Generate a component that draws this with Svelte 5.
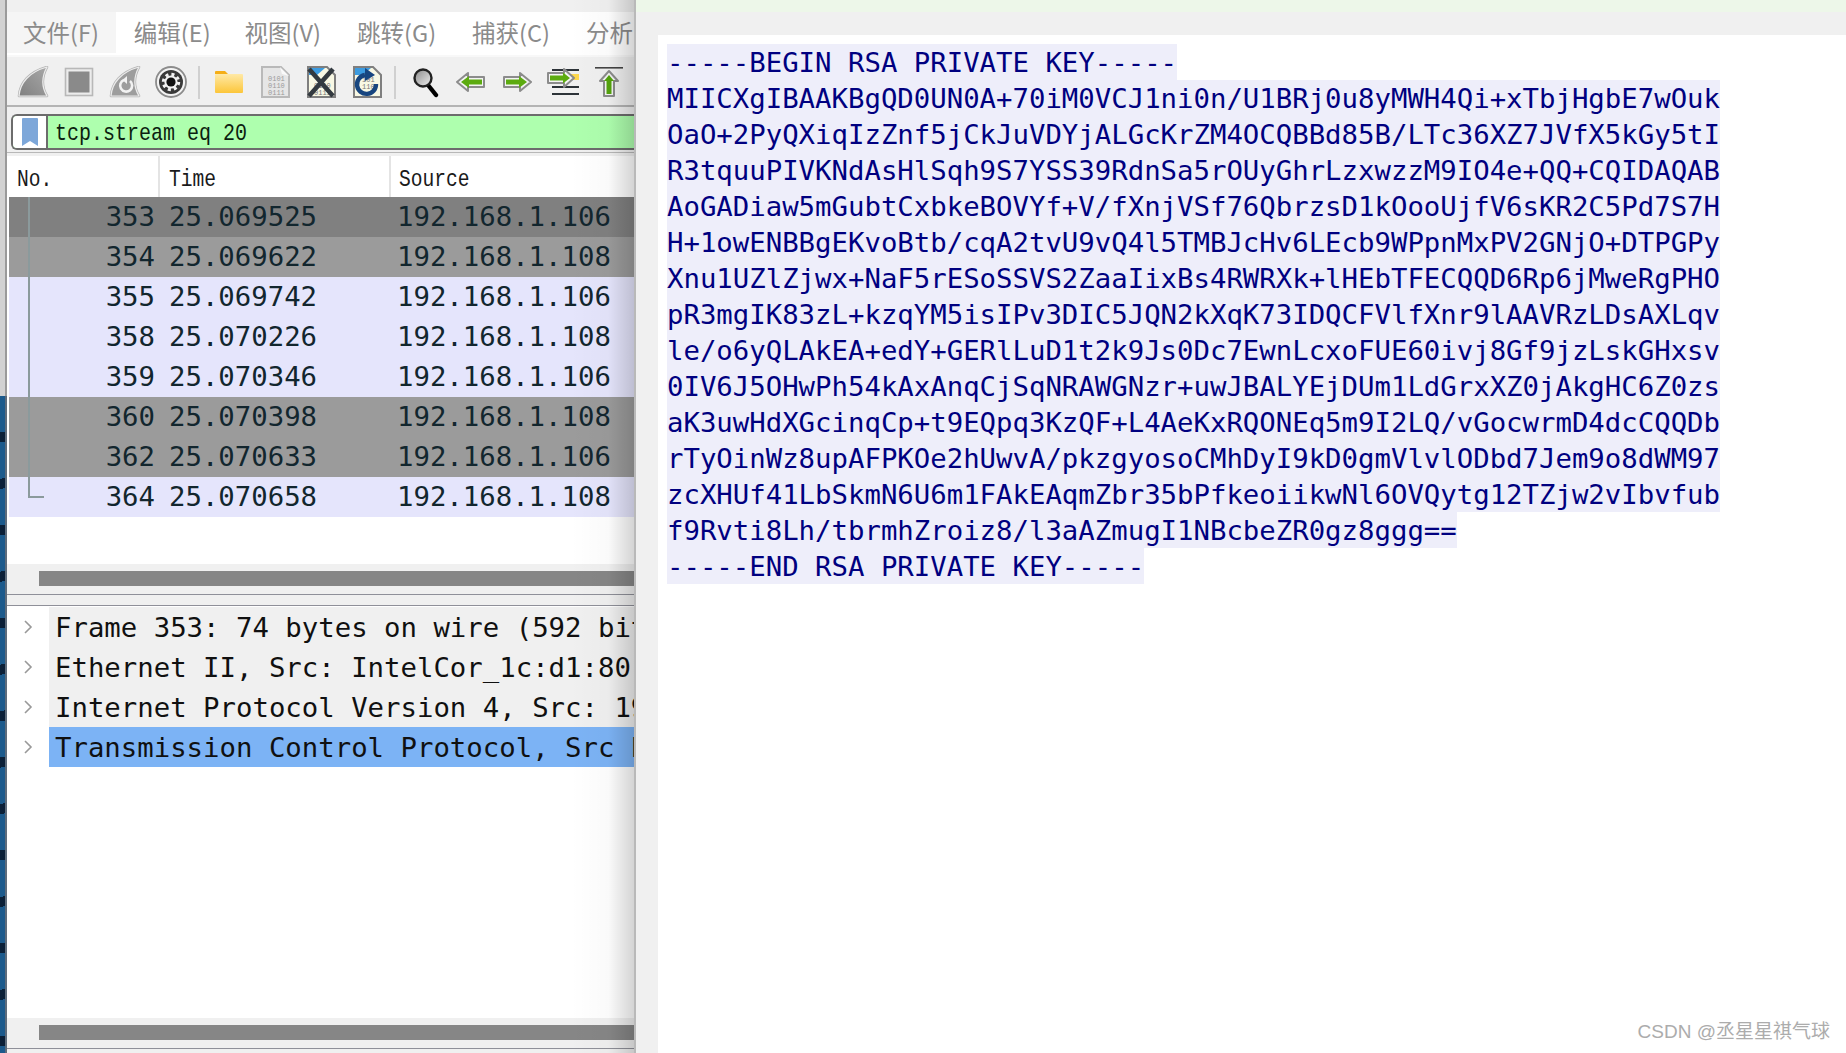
<script lang="ts">
	// Wireshark capture window on the left, extracted key text on the right

	const menus = ['文件(F)', '编辑(E)', '视图(V)', '跳转(G)', '捕获(C)', '分析'];

	const columns = ['No.', 'Time', 'Source'];

	const packets = [
		{ no: 353, time: '25.069525', src: '192.168.1.106', tone: 'dark' },
		{ no: 354, time: '25.069622', src: '192.168.1.108', tone: 'grey' },
		{ no: 355, time: '25.069742', src: '192.168.1.106', tone: 'lav' },
		{ no: 358, time: '25.070226', src: '192.168.1.108', tone: 'lav' },
		{ no: 359, time: '25.070346', src: '192.168.1.106', tone: 'lav' },
		{ no: 360, time: '25.070398', src: '192.168.1.108', tone: 'grey' },
		{ no: 362, time: '25.070633', src: '192.168.1.106', tone: 'grey' },
		{ no: 364, time: '25.070658', src: '192.168.1.108', tone: 'lav' }
	];

	const details = [
		'Frame 353: 74 bytes on wire (592 bits), 74 bytes captured',
		'Ethernet II, Src: IntelCor_1c:d1:80',
		'Internet Protocol Version 4, Src: 192.168.1.106',
		'Transmission Control Protocol, Src Port: 1234'
	];

	const keyLines = [
		'-----BEGIN RSA PRIVATE KEY-----',
		'MIICXgIBAAKBgQD0UN0A+70iM0VCJ1ni0n/U1BRj0u8yMWH4Qi+xTbjHgbE7wOuk',
		'OaO+2PyQXiqIzZnf5jCkJuVDYjALGcKrZM4OCQBBd85B/LTc36XZ7JVfX5kGy5tI',
		'R3tquuPIVKNdAsHlSqh9S7YSS39RdnSa5rOUyGhrLzxwzzM9IO4e+QQ+CQIDAQAB',
		'AoGADiaw5mGubtCxbkeBOVYf+V/fXnjVSf76QbrzsD1kOooUjfV6sKR2C5Pd7S7H',
		'H+1owENBBgEKvoBtb/cqA2tvU9vQ4l5TMBJcHv6LEcb9WPpnMxPV2GNjO+DTPGPy',
		'Xnu1UZlZjwx+NaF5rESoSSVS2ZaaIixBs4RWRXk+lHEbTFECQQD6Rp6jMweRgPHO',
		'pR3mgIK83zL+kzqYM5isIPv3DIC5JQN2kXqK73IDQCFVlfXnr9lAAVRzLDsAXLqv',
		'le/o6yQLAkEA+edY+GERlLuD1t2k9Js0Dc7EwnLcxoFUE60ivj8Gf9jzLskGHxsv',
		'0IV6J5OHwPh54kAxAnqCjSqNRAWGNzr+uwJBALYEjDUm1LdGrxXZ0jAkgHC6Z0zs',
		'aK3uwHdXGcinqCp+t9EQpq3KzQF+L4AeKxRQONEq5m9I2LQ/vGocwrmD4dcCQQDb',
		'rTyOinWz8upAFPKOe2hUwvA/pkzgyosoCMhDyI9kD0gmVlvlODbd7Jem9o8dWM97',
		'zcXHUf41LbSkmN6U6m1FAkEAqmZbr35bPfkeoiikwNl6OVQytg12TZjw2vIbvfub',
		'f9Rvti8Lh/tbrmhZroiz8/l3aAZmugI1NBcbeZR0gz8ggg==',
		'-----END RSA PRIVATE KEY-----'
	];

	const fin = 'M2 30 C3 17 12 6 30 1 C25 10 24 20 30 30 Z';
</script>

<div class="screen">
	<div class="desktop">
		<div class="desktop-top"></div>
		<div class="desktop-bottom"></div>
	</div>

	<section class="capture">
		<div class="top-gap"></div>

		<nav class="menu">
			{#each menus as item, i}
				<span class="menu-item" class:hover={i === 0}>{item}</span>
			{/each}
		</nav>

		<div class="toolbar">
			<span class="tool">
				<svg viewBox="0 0 32 32" width="32" height="32">
					<defs>
						<linearGradient id="finfill" x1="1" y1="0" x2="0" y2="1">
							<stop offset="0" stop-color="#a8a8a8" />
							<stop offset="1" stop-color="#808080" />
						</linearGradient>
					</defs>
					<path d={fin} fill="none" stroke="#b4b4b4" stroke-width="2.6" stroke-linejoin="round" />
					<path d={fin} fill="url(#finfill)" stroke="#ececec" stroke-width="1.2" stroke-linejoin="round" />
				</svg>
			</span>
			<span class="tool">
				<svg viewBox="0 0 32 32" width="32" height="32">
					<rect x="2.5" y="2.5" width="27" height="27" fill="#ececec" stroke="#b8b8b8" stroke-width="1.6" />
					<rect x="5.5" y="5.5" width="21" height="21" fill="#8a8a8a" />
				</svg>
			</span>
			<span class="tool">
				<svg viewBox="0 0 32 32" width="32" height="32">
					<path d={fin} fill="none" stroke="#b4b4b4" stroke-width="2.6" stroke-linejoin="round" />
					<path d={fin} fill="#9d9d9d" stroke="#ececec" stroke-width="1.2" stroke-linejoin="round" />
					<path d="M21 15 A6 6 0 1 1 15 14" fill="none" stroke="#f2f2f2" stroke-width="2.6" />
					<path d="M18 10 L13.5 14 L18 18 Z" fill="#f2f2f2" />
				</svg>
			</span>
			<span class="tool">
				<svg viewBox="0 0 32 32" width="32" height="32">
					<circle cx="16" cy="16" r="15" fill="#f4f4f4" stroke="#8c8c8c" stroke-width="1.8" />
					<circle cx="16" cy="16" r="12" fill="#3a3a3a" />
					<circle cx="16" cy="16" r="7.6" fill="none" stroke="#f2f2f2" stroke-width="3.2" stroke-dasharray="3 3" />
					<circle cx="16" cy="16" r="6.6" fill="#f2f2f2" />
					<circle cx="16" cy="16" r="4.6" fill="#111" />
				</svg>
			</span>
			<span class="tool-sep"></span>
			<span class="tool">
				<svg viewBox="0 0 32 32" width="32" height="32">
					<defs>
						<linearGradient id="folder" x1="0" y1="0" x2="0" y2="1">
							<stop offset="0" stop-color="#ffe9a6" />
							<stop offset="1" stop-color="#fcc63a" />
						</linearGradient>
					</defs>
					<path d="M2 6 a1 1 0 0 1 1-1 h9 l3 3 h-13 Z" fill="#f5ae17" />
					<rect x="2" y="8" width="28" height="19" rx="1" fill="url(#folder)" />
				</svg>
			</span>
			<span class="tool">
				<svg viewBox="0 0 32 32" width="32" height="32">
					<path d="M3 1 H22 L30 9 V31 H3 Z" fill="#e6e6e6" stroke="#b9b9b9" stroke-width="2" />
					<path d="M21 1 L23 8 L30 10 Z" fill="#fafafa" />
					<text class="bits" x="9" y="15" fill="#9a9a9a">0101</text>
					<text class="bits" x="9" y="22" fill="#9a9a9a">0110</text>
					<text class="bits" x="9" y="29" fill="#9a9a9a">0111</text>
				</svg>
			</span>
			<span class="tool">
				<svg viewBox="0 0 32 32" width="32" height="32">
					<path d="M3 1 H22 L30 9 V31 H3 Z" fill="#f8f8e4" stroke="#7f7f7f" stroke-width="2" />
					<path d="M4 2 H20 L12 9 H4 Z" fill="#3c9be0" />
					<text class="bits" x="9" y="22" fill="#777">0110</text>
					<text class="bits" x="9" y="29" fill="#777">0111</text>
					<path d="M4 3 L28 30 M28 3 L4 30" stroke="#333a40" stroke-width="4.6" />
				</svg>
			</span>
			<span class="tool">
				<svg viewBox="0 0 32 32" width="32" height="32">
					<path d="M3 1 H22 L30 9 V31 H3 Z" fill="#f8f8e4" stroke="#7f7f7f" stroke-width="2" />
					<path d="M4 2 H20 L12 9 H4 Z" fill="#3c9be0" />
					<text class="bits" x="11" y="16" fill="#777">101</text>
					<text class="bits" x="11" y="23" fill="#777">110</text>
					<path d="M25 18 A9.5 9.5 0 1 1 14 9" fill="none" stroke="#17457f" stroke-width="4.4" />
					<path d="M14 2 L24 9 L14 15 Z" fill="#17457f" />
				</svg>
			</span>
			<span class="tool-sep"></span>
			<span class="tool">
				<svg viewBox="0 0 32 32" width="32" height="32">
					<defs>
						<linearGradient id="lens" x1="0" y1="0" x2="1" y2="1">
							<stop offset="0" stop-color="#8a8a8a" />
							<stop offset="1" stop-color="#f0f0f0" />
						</linearGradient>
					</defs>
					<path d="M19 19 L27 29" stroke="#000" stroke-width="4.4" stroke-linecap="round" />
					<circle cx="14" cy="12" r="8.5" fill="url(#lens)" stroke="#222" stroke-width="2.4" />
				</svg>
			</span>
			<span class="tool">
				<svg viewBox="0 0 32 32" width="32" height="32">
					<path d="M2 16 L13 7 V11 H29 V21 H13 V25 Z" fill="#f4f4f4" stroke="#8c8c8c" stroke-width="2" stroke-linejoin="round" />
					<path d="M6 16 L14 10 V13.5 H27 V18.5 H14 V22 Z" fill="#5cab10" />
				</svg>
			</span>
			<span class="tool">
				<svg viewBox="0 0 32 32" width="32" height="32">
					<path d="M30 16 L19 7 V11 H3 V21 H19 V25 Z" fill="#f4f4f4" stroke="#8c8c8c" stroke-width="2" stroke-linejoin="round" />
					<path d="M26 16 L18 10 V13.5 H5 V18.5 H18 V22 Z" fill="#5cab10" />
				</svg>
			</span>
			<span class="tool">
				<svg viewBox="0 0 32 32" width="32" height="32">
					<rect x="5" y="3" width="27" height="2" fill="#2d3338" />
					<rect x="24" y="8" width="8" height="6" fill="#ffd84d" />
					<rect x="5" y="20" width="27" height="2" fill="#2d3338" />
					<rect x="5" y="27" width="27" height="2" fill="#2d3338" />
					<path d="M27 12 L17 3 V7 H1 V17 H17 V21 Z" fill="#f4f4f4" stroke="#8c8c8c" stroke-width="2" stroke-linejoin="round" />
					<path d="M23 12 L16 6.5 V9.5 H3 V14.5 H16 V17.5 Z" fill="#5cab10" />
				</svg>
			</span>
			<span class="tool">
				<svg viewBox="0 0 32 32" width="32" height="32">
					<rect x="2" y="1" width="28" height="1.6" fill="#444" />
					<path d="M16 5 L25 15 H21 V30 H11 V15 H7 Z" fill="#f4f4f4" stroke="#8c8c8c" stroke-width="2" stroke-linejoin="round" />
					<path d="M16 9 L21 15 H18.5 V28 H13.5 V15 H11 Z" fill="#54a30c" />
				</svg>
			</span>
		</div>

		<div class="filterbar">
			<div class="filter">
				<span class="bookmark">
					<svg viewBox="0 0 18 28" width="18" height="28">
						<path d="M1 1 a1 1 0 0 1 1-1 h14 a1 1 0 0 1 1 1 V28 L9 23 L1 28 Z" fill="#7da7d9" />
					</svg>
				</span>
				<span class="filter-text"><span class="tall">tcp.stream eq 20</span></span>
			</div>
		</div>

		<div class="col-header">
			{#each columns as col}
				<span class="col"><span class="tall">{col}</span></span>
			{/each}
		</div>

		<div class="packets">
			{#each packets as p}
				<div class="packet {p.tone}">
					<span class="no">{p.no}</span>
					<span>{p.time}</span>
					<span class="src">{p.src}</span>
				</div>
			{/each}
			<div class="conv-line"></div>
		</div>

		<div class="hscroll"><div class="thumb"></div></div>
		<div class="pane-split"></div>

		<div class="details">
			{#each details as line, i}
				<div class="detail">
					<svg class="chevron" viewBox="0 0 10 16" width="10" height="16">
						<polyline points="2 2 8 8 2 14" fill="none" stroke="#999" stroke-width="1.6" />
					</svg>
					<span class="detail-text" class:selected={i === 3}>{line}</span>
				</div>
			{/each}
		</div>

		<div class="hscroll"><div class="thumb"></div></div>
		<div class="pane-end"></div>

		<div class="edge-shadow"></div>
	</section>

	<section class="keyview">
		<div class="key-strip"></div>
		<div class="key-body">
			<div class="key-page">
				{#each keyLines as line}
					<div class="key-line">{line}</div>
				{/each}
			</div>
		</div>
	</section>

	<div class="watermark">CSDN @丞星星祺气球</div>
</div>

<style>
	:global(body) {
		margin: 0;
		background: #fff;
	}

	.screen {
		position: relative;
		display: flex;
		width: 1846px;
		height: 1053px;
		overflow: hidden;
		font-family: 'DejaVu Sans Mono', monospace;
	}

	.desktop {
		display: flex;
		flex-direction: column;
		flex: none;
		width: 7px;
	}

	.desktop-top {
		height: 396px;
		background: #d2d2d2;
		border-right: 2px solid #9a9a9a;
		box-sizing: border-box;
	}

	.desktop-bottom {
		flex: 1;
		background: repeating-linear-gradient(172deg, #1c5a8c 0 36px, #0b2038 36px 46px);
		border-right: 2px solid #5d6c7c;
		box-sizing: border-box;
	}

	.capture {
		position: relative;
		display: flex;
		flex-direction: column;
		flex: none;
		width: 627px;
		height: 100%;
		overflow: hidden;
		background: #f0f0f0;
	}

	.top-gap {
		flex: none;
		height: 12px;
		background: #f0f0f0;
	}

	.menu {
		display: flex;
		flex: none;
		height: 43px;
		background: #fff;
		font-family: 'Noto Sans CJK SC', sans-serif;
		font-size: 23.5px;
		line-height: 41px;
		color: #8b8b8b;
		white-space: nowrap;
	}

	.menu-item {
		padding: 0 18px;
	}

	.menu-item:first-child {
		padding-left: 16px;
		padding-right: 17px;
	}

	.menu-item:nth-child(2) {
		padding-right: 16px;
	}

	.menu-item.hover {
		height: 41px;
		background: #f5f5f5;
	}

	.toolbar {
		display: flex;
		flex: none;
		align-items: center;
		box-sizing: border-box;
		height: 52px;
		padding: 2px 0 0 3px;
		border-top: 2px solid #f8f8f8;
		border-bottom: 2px solid #b4b4b4;
		background: #f0f0f0;
	}

	.tool {
		display: flex;
		flex: none;
		justify-content: center;
		width: 46px;
	}

	.tool-sep {
		flex: none;
		box-sizing: border-box;
		width: 12px;
		height: 33px;
		border-left: 2px solid #d0d0d0;
		margin-left: 4px;
		margin-right: -4px;
	}

	.filterbar {
		flex: none;
		height: 46px;
		padding-top: 7px;
		padding-left: 4px;
		box-sizing: border-box;
		background: #f0f0f0;
		border-bottom: 1px solid #b8b8b8;
	}

	.filter {
		display: flex;
		height: 36px;
		box-sizing: border-box;
		border: 2px solid #6c6c6c;
		border-right: none;
		border-radius: 6px 0 0 6px;
		background: #aeffae;
		overflow: hidden;
	}

	.bookmark {
		display: flex;
		flex: none;
		align-items: center;
		justify-content: center;
		box-sizing: border-box;
		width: 35px;
		background: #fff;
		border-right: 2px solid #6c6c6c;
	}

	.filter-text {
		padding-left: 7px;
		font-family: 'Liberation Mono', monospace;
		font-size: 20px;
		line-height: 36px;
		color: #0c1f10;
	}

	/* the capture's header font is a tall narrow bitmap face */
	.tall {
		display: inline-block;
		transform: scaleY(1.2);
	}

	.col-header {
		display: grid;
		flex: none;
		grid-template-columns: 153px 231px 1fr;
		box-sizing: border-box;
		height: 44px;
		border-top: 3px solid #f0f0f0;
		background: #fff;
		font-family: 'Liberation Mono', monospace;
		font-size: 19.6px;
		line-height: 49px;
		color: #1a1a1a;
	}

	.col {
		height: 41px;
		padding-left: 9px;
		border-right: 2px solid #e4e4e4;
	}

	.col:first-child {
		padding-left: 10px;
	}

	.col:last-child {
		border-right: none;
		padding-left: 8px;
	}

	.packets {
		position: relative;
		flex: none;
		height: 367px;
		padding-left: 2px;
		box-sizing: border-box;
		background: #fff;
	}

	.packet {
		display: grid;
		grid-template-columns: 160px 229px 1fr;
		height: 40px;
		font-size: 27.34px;
		line-height: 40px;
		color: #12262e;
		white-space: nowrap;
	}

	.packet .no {
		padding-right: 14px;
		text-align: right;
	}

	.packet .src {
		margin-left: -1px;
	}

	.packet.dark {
		background: #808080;
	}

	.packet.grey {
		background: #9b9b9b;
	}

	.packet.lav {
		background: #e5e5fc;
	}

	.conv-line {
		position: absolute;
		top: 0;
		left: 21px;
		width: 16px;
		height: 301px;
		border-left: 2px solid #8b9a9c;
		border-bottom: 2px solid #8b9a9c;
		box-sizing: border-box;
	}

	.hscroll {
		flex: none;
		height: 30px;
		padding: 7px 0 0 32px;
		box-sizing: border-box;
		background: #f0f0f0;
	}

	.thumb {
		height: 15px;
		background: #868686;
	}

	.pane-split {
		flex: none;
		height: 12px;
		box-sizing: border-box;
		border-top: 1px solid #8f9099;
		border-bottom: 1px solid #8f9099;
		background: #f0f0f0;
	}

	.details {
		flex: none;
		height: 412px;
		padding-top: 1px;
		box-sizing: border-box;
		background: #fff;
	}

	.detail {
		display: flex;
		align-items: center;
		height: 40px;
		white-space: nowrap;
	}

	.chevron {
		flex: none;
		margin-left: 16px;
		margin-right: 16px;
	}

	.detail-text {
		flex: 1;
		box-sizing: border-box;
		height: 40px;
		padding-left: 6px;
		overflow: hidden;
		background: #f0f0f0;
		font-size: 27.34px;
		line-height: 42px;
		color: #101010;
	}

	.detail-text.selected {
		background: #7cb3f5;
	}

	.pane-end {
		flex: none;
		height: 4px;
		box-sizing: border-box;
		border-top: 1px solid #8f9099;
		background: #f0f0f0;
	}

	/* shadow the key window throws onto the capture window */
	.edge-shadow {
		position: absolute;
		top: 0;
		right: 0;
		bottom: 0;
		width: 64px;
		background: linear-gradient(to right, rgba(0, 0, 0, 0), rgba(0, 0, 0, 0.02) 60%, rgba(0, 0, 0, 0.17));
		pointer-events: none;
	}

	.keyview {
		display: flex;
		flex-direction: column;
		flex: 1;
		min-width: 0;
		box-sizing: border-box;
		border-left: 2px solid #b9b9b9;
		background: #f0f0f0;
	}

	.key-strip {
		flex: none;
		height: 12px;
		background: #edf7e9;
	}

	.key-body {
		flex: 1;
		padding: 23px 0 0 22px;
	}

	.key-page {
		box-sizing: border-box;
		height: 100%;
		padding: 9px 0 0 9px;
		background: #fff;
	}

	.key-line {
		width: fit-content;
		height: 36px;
		background: #eeeefa;
		font-size: 27.34px;
		line-height: 38px;
		color: #000080;
		white-space: pre;
	}

	.watermark {
		position: absolute;
		right: 16px;
		bottom: 7px;
		font-family: 'Liberation Sans', 'Noto Sans CJK SC', sans-serif;
		font-size: 19px;
		line-height: 28px;
		color: #acacac;
	}

	.bits {
		font-family: 'Liberation Mono', monospace;
		font-size: 7px;
	}
</style>
